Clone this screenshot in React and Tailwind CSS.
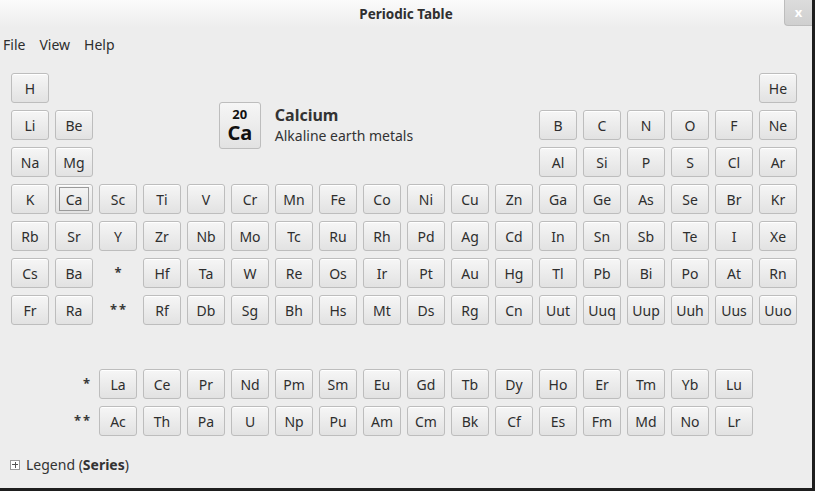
import React from "react";

const rows = [
  ["H", null, null, null, null, null, null, null, null, null, null, null, null, null, null, null, null, "He"],
  ["Li", "Be", null, null, null, null, null, null, null, null, null, null, "B", "C", "N", "O", "F", "Ne"],
  ["Na", "Mg", null, null, null, null, null, null, null, null, null, null, "Al", "Si", "P", "S", "Cl", "Ar"],
  ["K", "Ca", "Sc", "Ti", "V", "Cr", "Mn", "Fe", "Co", "Ni", "Cu", "Zn", "Ga", "Ge", "As", "Se", "Br", "Kr"],
  ["Rb", "Sr", "Y", "Zr", "Nb", "Mo", "Tc", "Ru", "Rh", "Pd", "Ag", "Cd", "In", "Sn", "Sb", "Te", "I", "Xe"],
  ["Cs", "Ba", "c*", "Hf", "Ta", "W", "Re", "Os", "Ir", "Pt", "Au", "Hg", "Tl", "Pb", "Bi", "Po", "At", "Rn"],
  ["Fr", "Ra", "c**", "Rf", "Db", "Sg", "Bh", "Hs", "Mt", "Ds", "Rg", "Cn", "Uut", "Uuq", "Uup", "Uuh", "Uus", "Uuo"],
  [null, null, null, null, null, null, null, null, null, null, null, null, null, null, null, null, null, null],
  [null, "r*", "La", "Ce", "Pr", "Nd", "Pm", "Sm", "Eu", "Gd", "Tb", "Dy", "Ho", "Er", "Tm", "Yb", "Lu", null],
  [null, "r**", "Ac", "Th", "Pa", "U", "Np", "Pu", "Am", "Cm", "Bk", "Cf", "Es", "Fm", "Md", "No", "Lr", null],
];

function ElementButton({ symbol, selected }) {
  return (
    <div className="flex h-[30px] w-[38px] items-center justify-center rounded-[3px] border border-[#bdbdbd] bg-gradient-to-b from-[#f6f6f6] to-[#e2e2e2] text-[14px] text-[#2e2e2e] shadow-[inset_0_1px_0_#fff]">
      {selected ? (
        <span className="flex h-[24px] w-[30px] items-center justify-center border border-[#9a9a9a]">
          {symbol}
        </span>
      ) : (
        symbol
      )}
    </div>
  );
}

function Cell({ value }) {
  if (!value) return <div className="h-[30px] w-[38px]" />;
  if (value.startsWith("c*")) {
    return (
      <div className="flex h-[30px] w-[38px] items-center justify-center pl-[2px] text-[13px] font-bold tracking-[2px] text-[#3a3a3a]">
        {value.slice(1)}
      </div>
    );
  }
  if (value.startsWith("r*")) {
    return (
      <div className="flex h-[30px] w-[38px] items-center justify-end pr-[1px] text-[13px] font-bold tracking-[2px] text-[#3a3a3a]">
        {value.slice(1)}
      </div>
    );
  }
  return <ElementButton symbol={value} selected={value === "Ca"} />;
}

export default function App() {
  return (
    <div
      className="h-[491px] w-[815px] overflow-hidden bg-[#1e1e1e]"
      style={{ fontFamily: '"Noto Sans", "Open Sans", sans-serif' }}
    >
      <div className="flex h-[488px] w-[812px] flex-col bg-[#ededed]">
        {/* title bar */}
        <div className="relative flex h-[28px] items-center justify-center bg-gradient-to-b from-[#fbfbfb] to-[#ededed]">
          <span className="text-[13.5px] font-bold text-[#2f2f2f]">Periodic Table</span>
          <div className="absolute right-0 top-0 flex h-[26px] w-[28px] items-center justify-center rounded-bl-[4px] border-b border-l border-[#bdbdbd] bg-gradient-to-b from-[#dcdcdc] to-[#cfcfcf] text-[13px] font-bold text-white">
            x
          </div>
        </div>

        {/* menu bar */}
        <div className="flex h-[32px] items-center gap-[14px] pl-[3px] text-[14px] text-[#2e2e2e]">
          <span>File</span>
          <span>View</span>
          <span>Help</span>
        </div>

        {/* table */}
        <div className="mt-[13px] grid grid-cols-[repeat(18,38px)] grid-rows-[repeat(10,30px)] gap-x-[6px] gap-y-[7px] pl-[11px]">
          <div className="col-start-3 col-end-13 row-start-1 row-end-4 flex items-center justify-center gap-[14px]">
            <div className="flex h-[47px] w-[42px] flex-col items-center justify-center rounded-[3px] border border-[#bdbdbd] bg-gradient-to-b from-[#f6f6f6] to-[#e2e2e2] text-[#111]">
              <span className="text-[13px] font-bold leading-[15px]">20</span>
              <span className="text-[20px] font-bold leading-[21px]">Ca</span>
            </div>
            <div className="flex flex-col text-[#333]">
              <span className="text-[16px] font-bold leading-[22px]">Calcium</span>
              <span className="text-[14px] leading-[20px]">Alkaline earth metals</span>
            </div>
          </div>
          {rows.map((row, r) =>
            row.map((v, c) =>
              r < 3 && c >= 2 && c < 12 ? null : <Cell key={r + "-" + c} value={v} />
            )
          )}
        </div>

        {/* legend */}
        <div className="mt-[18px] flex items-center gap-[6px] pl-[10px] text-[14px] text-[#333]">
          <span className="relative flex h-[10px] w-[10px] items-center justify-center border border-[#9a9a9a] bg-white">
            <span className="absolute h-[1px] w-[6px] bg-[#555]" />
            <span className="absolute h-[6px] w-[1px] bg-[#555]" />
          </span>
          <span>
            Legend (<b>Series</b>)
          </span>
        </div>
      </div>
    </div>
  );
}
